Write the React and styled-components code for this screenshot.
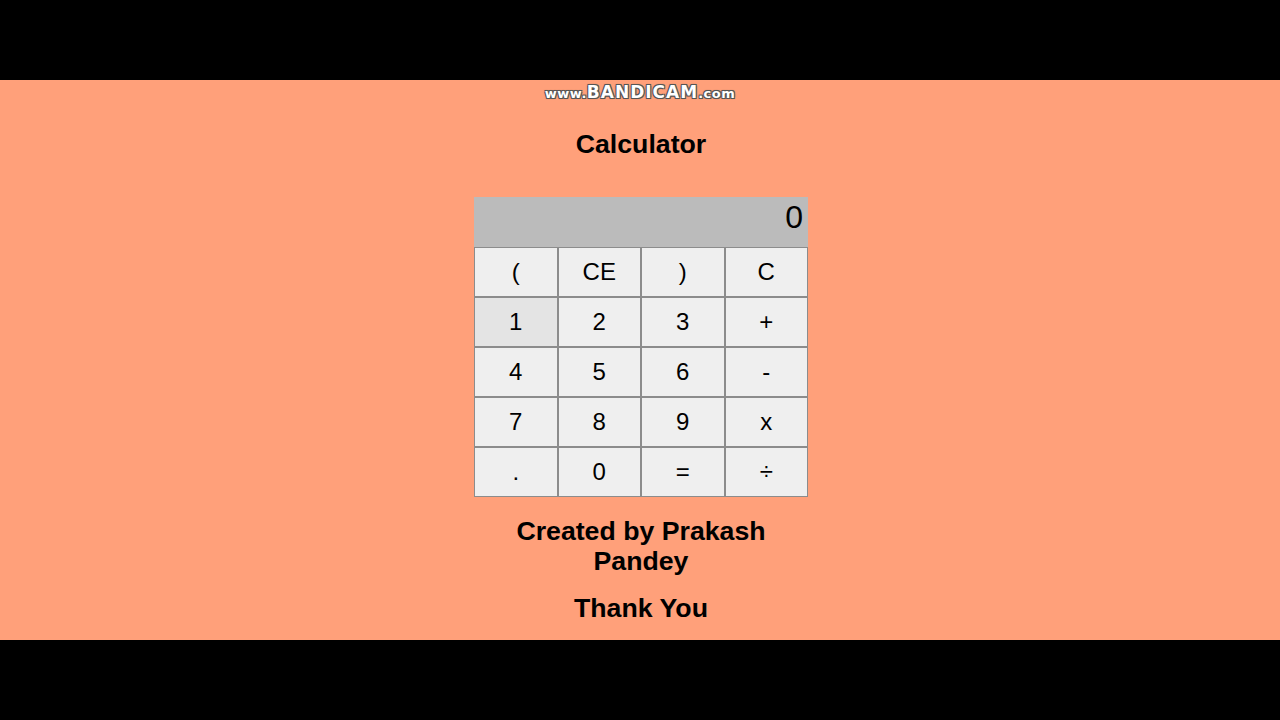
import React from "react";
import styled, { createGlobalStyle } from "styled-components";

const GlobalStyle = createGlobalStyle`
  html, body {
    margin: 0;
    padding: 0;
    background: #000;
  }
  body {
    font-family: "Liberation Sans", Arial, sans-serif;
  }
`;

const KEYS = [
  "(", "CE", ")", "C",
  "1", "2", "3", "+",
  "4", "5", "6", "-",
  "7", "8", "9", "x",
  ".", "0", "=", "÷",
];

export default function App() {
  return (
    <>
      <GlobalStyle />
      <Frame>
        <Letterbox />
        <Stage>
          <Watermark>
            <small>www.</small>BANDICAM<small>.com</small>
          </Watermark>
          <Title>Calculator</Title>
          <Calculator>
            <Display>0</Display>
            <Keypad>
              {KEYS.map((key) => (
                <Key key={key} $hover={key === "1"}>
                  {key}
                </Key>
              ))}
            </Keypad>
          </Calculator>
          <Credit>Created by Prakash Pandey</Credit>
          <Thanks>Thank You</Thanks>
        </Stage>
        <Letterbox />
      </Frame>
    </>
  );
}

const Frame = styled.div`
  display: flex;
  flex-direction: column;
  width: 1280px;
  height: 720px;
  overflow: hidden;
`;

const Letterbox = styled.div`
  height: 80px;
  flex-shrink: 0;
  background: #000;
`;

const Stage = styled.main`
  position: relative;
  display: flex;
  flex-direction: column;
  align-items: center;
  height: 561px;
  padding-left: 2px;
  background: #ffa07a;
  color: #000;
`;

const Watermark = styled.div`
  position: absolute;
  top: 2px;
  left: 50%;
  transform: translateX(-50%);
  font-family: "DejaVu Sans", sans-serif;
  font-weight: bold;
  font-size: 17px;
  letter-spacing: 1px;
  color: #fff;
  white-space: nowrap;
  text-shadow: -1px -1px 0 #555, 1px -1px 0 #555, -1px 1px 0 #555,
    1px 1px 0 #555, 0 0 2px #333;

  small {
    font-size: 13px;
    letter-spacing: 0.5px;
  }
`;

const Title = styled.h1`
  margin: 50px 0 0;
  font-size: 26.7px;
  line-height: 28px;
  font-weight: bold;
`;

const Calculator = styled.section`
  width: 334px;
  margin-top: 39px;
`;

const Display = styled.div`
  height: 50px;
  padding-right: 5px;
  background: #bbbbbb;
  font-size: 32px;
  line-height: 40px;
  text-align: right;
  box-sizing: border-box;
`;

const Keypad = styled.div`
  display: grid;
  grid-template-columns: repeat(4, 1fr);
  grid-auto-rows: 50px;
`;

const Key = styled.button`
  margin: 0;
  padding: 0;
  border: 1px solid #8c8c8c;
  background: ${(p) => (p.$hover ? "#e4e4e4" : "#efefef")};
  font-family: "Liberation Sans", Arial, sans-serif;
  font-size: 24px;
  color: #000;
  cursor: pointer;
`;

const Credit = styled.p`
  width: 334px;
  margin: 19px 0 0;
  font-size: 26.7px;
  line-height: 30px;
  font-weight: bold;
  text-align: center;
`;

const Thanks = styled.p`
  margin: 17px 0 0;
  font-size: 26.7px;
  line-height: 30px;
  font-weight: bold;
`;
